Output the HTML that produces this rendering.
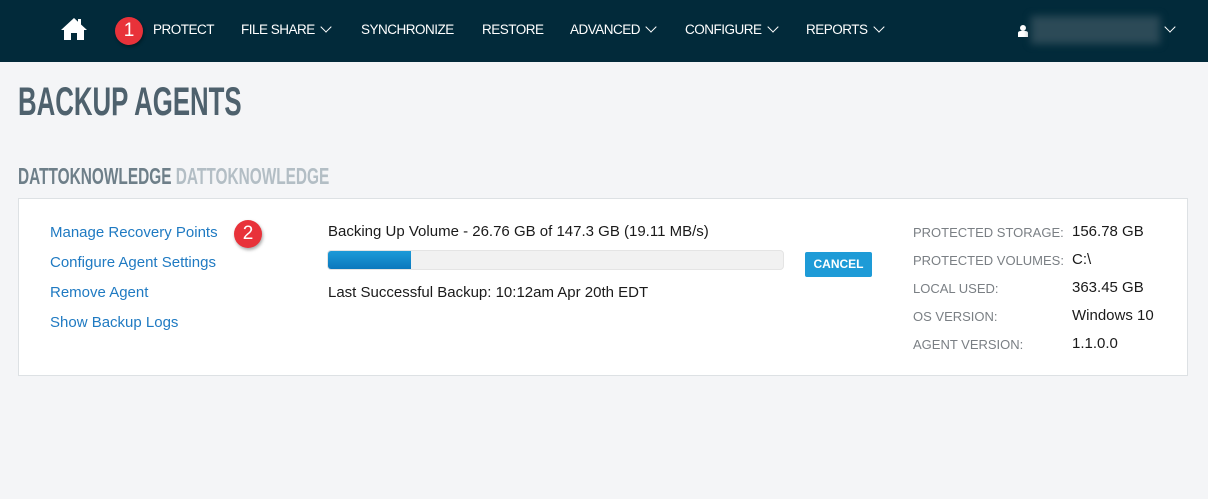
<!DOCTYPE html>
<html><head><meta charset="utf-8"><style>
*{margin:0;padding:0;box-sizing:border-box}
body{width:1208px;height:499px;background:#f4f5f7;font-family:"Liberation Sans",sans-serif;position:relative;overflow:hidden}
.nav{position:absolute;left:0;top:0;width:1208px;height:62px;background:#022a3a}
.nav .it{position:absolute;top:22px;color:#fff;font-size:13.5px;letter-spacing:-0.5px;white-space:nowrap}
.chev{display:inline-block;width:8px;height:8px;border-right:1.5px solid #fff;border-bottom:1.5px solid #fff;transform:rotate(45deg);margin-left:7px;position:relative;top:-3px}
.badge{position:absolute;width:28px;height:28px;border-radius:50%;background:#e8323a;color:#fff;font-size:19px;text-align:center;line-height:28px;box-shadow:1px 2px 3px rgba(0,0,0,.35)}
.sx{position:absolute;white-space:nowrap;transform-origin:0 0}
.a{position:absolute;left:50px;color:#1f7ac2;font-size:15px;white-space:nowrap}
.lbl{position:absolute;left:913px;color:#7a7f84;font-size:13px;white-space:nowrap}
.val{position:absolute;left:1072px;color:#1a1a1a;font-size:15px;white-space:nowrap}
</style></head><body>
<div class="nav">
<svg style="position:absolute;left:60px;top:17px" width="28" height="24" viewBox="0 0 28 24"><path d="M14 1 L1 13 L4 13 L4 23 L11 23 L11 16 L17 16 L17 23 L24 23 L24 13 L27 13 L21 7.5 L21 2 L18 2 L18 4.7 Z" fill="#fff"/></svg>
<div class="badge" style="left:115px;top:17px">1</div>
<div class="it" style="left:153px">PROTECT</div>
<div class="it" style="left:241px">FILE SHARE<span class="chev"></span></div>
<div class="it" style="left:361px">SYNCHRONIZE</div>
<div class="it" style="left:482px">RESTORE</div>
<div class="it" style="left:570px">ADVANCED<span class="chev"></span></div>
<div class="it" style="left:685px">CONFIGURE<span class="chev"></span></div>
<div class="it" style="left:806px">REPORTS<span class="chev"></span></div>
<svg style="position:absolute;left:1018px;top:25px" width="10" height="12" viewBox="0 0 10 12"><circle cx="5" cy="3" r="3" fill="#fff"/><path d="M0 12 L0 8 Q0 6 3 6 L7 6 Q10 6 10 8 L10 12Z" fill="#fff"/></svg>
<div style="position:absolute;left:1031px;top:16px;width:129px;height:28px;background:#2c4a57;filter:blur(4px)"></div>
<div class="it" style="left:1159px;top:22px"><span class="chev"></span></div>
</div>
<div class="sx" style="left:18px;top:80px;font-size:40px;font-weight:bold;color:#4e616d;transform:scaleX(0.645)">BACKUP AGENTS</div>
<div class="sx" style="left:18px;top:163px;font-size:23px;font-weight:bold;color:#6e7f89;transform:scaleX(0.67)">DATTOKNOWLEDGE <span style="color:#b3bec5">DATTOKNOWLEDGE</span></div>
<div style="position:absolute;left:18px;top:198px;width:1170px;height:178px;background:#fff;border:1px solid #dde1e4"></div>
<div class="a" style="top:224px">Manage Recovery Points</div>
<div class="a" style="top:254px">Configure Agent Settings</div>
<div class="a" style="top:284px">Remove Agent</div>
<div class="a" style="top:314px">Show Backup Logs</div>
<div class="badge" style="left:234px;top:220px">2</div>
<div style="position:absolute;left:328px;top:223px;font-size:15px;color:#1a1a1a;white-space:nowrap">Backing Up Volume - 26.76 GB of 147.3 GB (19.11 MB/s)</div>
<div style="position:absolute;left:327px;top:250px;width:457px;height:20px;background:#f1f1f1;border:1px solid #e4e4e4;border-radius:4px;overflow:hidden"><div style="width:83px;height:100%;background:linear-gradient(#1d9ad8,#0b78bd)"></div></div>
<div style="position:absolute;left:328px;top:284px;font-size:15px;color:#1a1a1a;white-space:nowrap">Last Successful Backup: 10:12am Apr 20th EDT</div>
<div style="position:absolute;left:805px;top:252px;width:67px;height:25px;background:#1e9bd7;border-radius:2px;color:#fff;font-size:12px;font-weight:bold;text-align:center;line-height:25px">CANCEL</div>
<div class="lbl" style="top:225px">PROTECTED STORAGE:</div><div class="val" style="top:223px">156.78 GB</div>
<div class="lbl" style="top:253px">PROTECTED VOLUMES:</div><div class="val" style="top:251px">C:\</div>
<div class="lbl" style="top:281px">LOCAL USED:</div><div class="val" style="top:279px">363.45 GB</div>
<div class="lbl" style="top:309px">OS VERSION:</div><div class="val" style="top:307px">Windows 10</div>
<div class="lbl" style="top:337px">AGENT VERSION:</div><div class="val" style="top:335px">1.1.0.0</div>
</body></html>
